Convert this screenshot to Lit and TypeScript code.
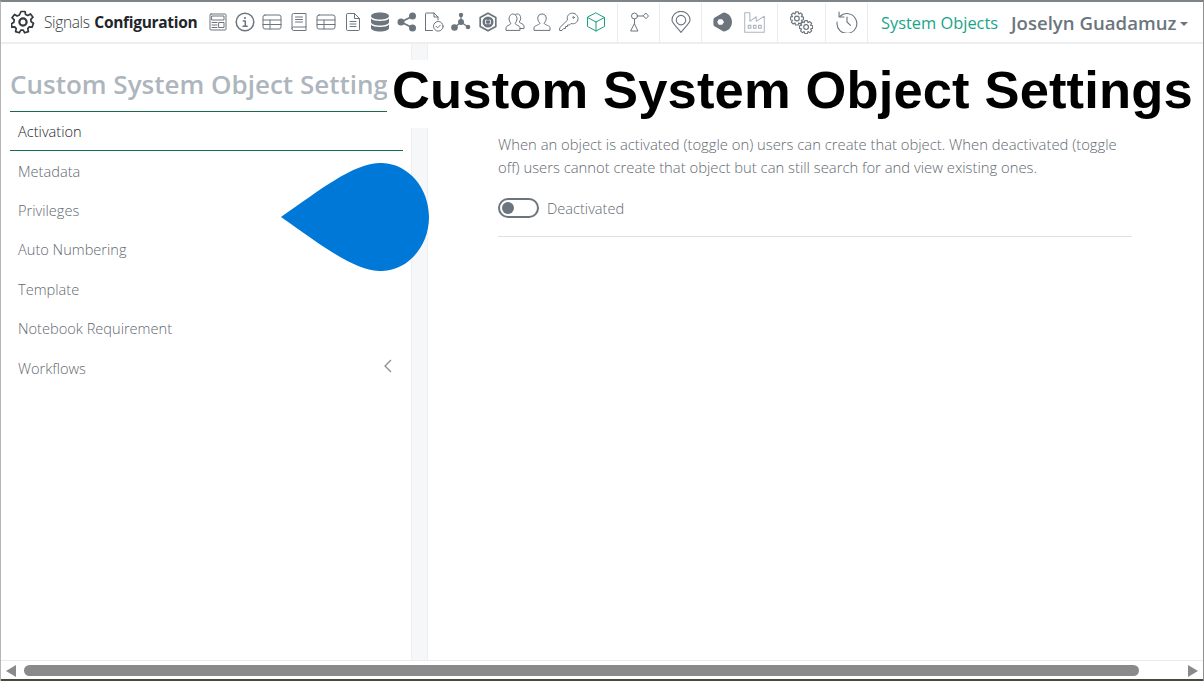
import { LitElement, html, css, svg } from "lit";
import { customElement } from "lit/decorators.js";

const s = (body: unknown, cls = "") =>
  html`<svg class="ic ${cls}" viewBox="0 0 20 20" fill="none" stroke="currentColor" stroke-width="1" stroke-linejoin="round" stroke-linecap="round">${body}</svg>`;

const grid = svg`<rect x="1" y="3" width="18" height="14" rx="2"/><path d="M1 8h18M1 12.500h18M8 8v9"/>`;
const icons = [
  s(svg`<rect x="2" y="2" width="16" height="16" rx="1"/><rect x="4" y="4" width="12" height="4"/><path d="M4 10.500h5M4 13h5M4 15.500h5"/><rect x="11" y="10.500" width="5" height="5"/>`),
  s(svg`<circle cx="10" cy="10" r="8.800" stroke-width="1.500"/><circle cx="10" cy="6" r="1.100" fill="currentColor" stroke="none"/><path d="M8.300 9h2v5M8 14.300h4.200" stroke-width="1.500"/>`),
  s(grid),
  s(svg`<path d="M3 16.500V3A1.500 1.500 0 0 1 4.500 1.500H17v13.500H4.500A1.500 1.500 0 0 0 3 16.500 1.800 1.800 0 0 0 4.800 18.500H17v-3.500"/><path d="M6.500 5h7M6.500 7.500h7M6.500 10h7"/>`),
  s(grid),
  s(svg`<path d="M3.500 2.500A1 1 0 0 1 4.500 1.500h7L16.500 6.500v11a1 1 0 0 1-1 1h-11a1 1 0 0 1-1-1z"/><path d="M11.500 1.500v5h5M7 9.500h6M7 12h6M7 14.500h6"/>`),
  s(svg`<g fill="currentColor" stroke="none"><path d="M1 4c0-2 4-3.500 9-3.500S19 2 19 4s-4 3.500-9 3.500S1 6 1 4z"/><path d="M1 6.500C2.500 8.300 6 9 10 9s7.500-.7 9-2.500V10c0 2-4 3.500-9 3.500S1 12 1 10z"/><path d="M1 12.500C2.500 14.300 6 15 10 15s7.500-.7 9-2.500V16c0 2-4 3.500-9 3.500S1 18 1 16z"/></g>`),
  s(svg`<g fill="currentColor" stroke="none"><circle cx="15.500" cy="4" r="3.500"/><circle cx="15.500" cy="16" r="3.500"/><circle cx="4" cy="10" r="3.500"/></g><path d="M15 4.500 4 10l11 5.500" stroke-width="1.800"/>`),
  s(svg`<path d="M1.500 18.500V2a1 1 0 0 1 1-1h7.500L14 5v3M10 1v4h4M1.500 18.500h7"/><circle cx="14.300" cy="14.300" r="4.800"/><path d="m12 14.300 1.600 1.600 2.800-2.800"/>`),
  s(svg`<g fill="currentColor" stroke="none"><circle cx="10" cy="3" r="2.200"/><circle cx="10" cy="10" r="3"/><circle cx="3.500" cy="15.500" r="3.300"/><circle cx="17" cy="15" r="2.300"/></g><path d="M10 3v7L3.500 15.500M10 10l7 5" stroke-width="1.300"/>`),
  s(svg`<path d="M10 1.200 17.800 5.600v8.800L10 18.800 2.200 14.400V5.600z" stroke-width="1.700"/><circle cx="10" cy="10" r="5.500" fill="currentColor" stroke="none"/><path d="M9 8.200H7.500v3.600H9M11 8.200h1.500v3.600H11" stroke="#fff" stroke-width=".8"/>`),
  s(svg`<path d="M1 18v-2.500c0-1.500 4-2.500 5-4-2-2-2.500-5-1.500-7C5.500 2.500 7 2 8 2s2.500.5 3.500 2.500c1 2 .5 5-1.500 7 1 1.500 5 2.500 5 4V18z"/><path d="M10.500 2.500c1-.7 3-.8 4 .3 1.800 2 1.500 5.200-.3 7.200.8 1.300 4.800 2.200 4.800 3.800V16.500h-4"/>`),
  s(svg`<path d="M2 18v-2.500c0-1.700 5-2.500 6-4.200-2.200-2-2.800-5-1.700-7.300C7 2.500 8.800 2 10 2s3 .5 3.700 2c1.100 2.300.5 5.300-1.700 7.300 1 1.700 6 2.500 6 4.200V18z"/>`),
  s(svg`<path d="M1 15.500 8.500 8c-1-3 .5-6.200 4-6.800 3.500-.5 6.500 2.200 6.500 5.500 0 3.800-3.800 5.800-7 4.800l-1.500 1.500H8.500V14.500H6.500V16.500H4.500L3 18.500H1z"/><circle cx="14.500" cy="5.500" r=".8"/>`),
  s(svg`<path d="M10 1 18.500 5.500v9L10 19l-8.500-4.500v-9z"/><path d="M1.500 5.500 10 10l8.500-4.500M10 10v9"/>`, "green"),
];
const flow = s(svg`<circle cx="5.500" cy="4" r="3"/><path d="M8.500 4h6"/><path d="m17 1.300 2.500 2.700-2.500 2.700L14.500 4z"/><path d="M5.500 7v5"/><path d="M5.500 12l3.500 7h-7z"/>`, "flow");
const pin = s(svg`<path d="M10 19.500C5.500 14 1.800 10.700 1.800 8.500a8.200 8.200 0 0 1 16.400 0c0 2.200-3.700 5.500-8.200 11z"/><circle cx="10" cy="8.300" r="4.300"/>`, "big");
const blob = s(svg`<path fill-rule="evenodd" fill="currentColor" stroke="none" d="M1 6 10.500 .5c5 .3 8.500 4.500 8.500 9.500s-3.500 9.200-8.500 9.500L1 14c-.8-.8-.8-7.200 0-8zM5.800 7.200 4.200 10l1.600 2.800h3.400L11 10 9.200 7.200z"/>`);
const factory = s(svg`<path d="M1.500 18.500V1.500h4.500V9l5.500-4v4l7-4.500v14z" stroke="#adb5bd" stroke-width=".9"/><rect x="4.500" y="12.500" width="2.400" height="2.400" stroke="#adb5bd" stroke-width=".9"/><rect x="9" y="12.500" width="2.400" height="2.400" stroke="#adb5bd" stroke-width=".9"/><rect x="13.500" y="12.500" width="2.400" height="2.400" stroke="#adb5bd" stroke-width=".9"/>`, "fact");
const cogPath = (cx: number, cy: number, r: number) => {
  const pts: string[] = [];
  const n = 8;
  for (let i = 0; i < n; i++) {
    const a = (i * Math.PI * 2) / n;
    const w = Math.PI / n;
    const spec: [number, number][] = [
      [r * 0.72, -w],
      [r, -w * 0.5],
      [r, w * 0.5],
      [r * 0.72, w],
    ];
    for (const [rad, off] of spec) {
      pts.push(`${(cx + rad * Math.sin(a + off)).toFixed(2)} ${(cy - rad * Math.cos(a + off)).toFixed(2)}`);
    }
  }
  return svg`<path d="M${pts.join("L")}z"/><circle cx=${cx} cy=${cy} r=${r * 0.36}/>`;
};
const cogs = s(svg`${cogPath(6, 6.500, 5.800)}${cogPath(14, 14, 5.800)}`, "cogs");
const history = s(svg`<path d="M3.500 5A9 9 0 1 1 1 10"/><path d="M2.800 1v4.500h4.500"/><path d="M10 5.500V10l3.200 3"/>`, "big");
const gear = html`<svg class="gear" viewBox="0 0 24 24" fill="none" stroke="currentColor" stroke-width="1.700" stroke-linejoin="round"><path d="M10 1.500h4l.6 3 2.200 1 2.700-1.600 2.500 3.300-2.200 2.100.3 2.400 2.400 1.500-1.300 3.900-2.900-.3-1.500 1.800.6 3-3.700 1.200-1.500-2.600h-2.400l-1.500 2.600-3.700-1.200.6-3-1.500-1.800-2.900.3L.5 13.700l2.400-1.500.3-2.400L1 7.700l2.500-3.300 2.700 1.600 2.200-1z" /><circle cx="12" cy="12" r="3.600" stroke-width="2.200"/></svg>`;

const items = ["Activation", "Metadata", "Privileges", "Auto Numbering", "Template", "Notebook Requirement", "Workflows"];

@customElement("app-root")
export class AppRoot extends LitElement {
  static styles = css`
    :host {
      display: block; position: relative; width: 1204px; height: 681px; overflow: hidden; box-sizing: border-box;
      background: #fff; border-top: 2px solid #7f8489; border-left: 1px solid #b5b5b5; border-right: 1px solid #8f8f8f;
      font-family: "Open Sans", "Noto Sans", sans-serif; color: #6c757d;
    }
    .shell { display: flex; flex-direction: column; height: 100%; }
    header { display: flex; align-items: center; height: 40px; border-bottom: 2px solid #eceef0; flex: none; color: #6c757d; }
    .gear { width: 24px; height: 24px; margin: 0 9px 0 10px; color: #33383d; flex: none; }
    .brand { font-size: 15.500px; font-weight: 300; color: #343a40; white-space: nowrap; width: 160px; letter-spacing: -0.35px; }
    .brand b { font-weight: 700; color: #212529; letter-spacing: -0.3px; margin-left: 1px; }
    .slots { display: flex; }
    .slot { width: 27px; display: flex; justify-content: center; align-items: center; height: 36px; }
    .seg { display: flex; align-items: center; justify-content: center; gap: 10px; height: 39px; border-left: 1px solid #e9ecef; flex: none; box-sizing: border-box; }
    .w42 { width: 42px; }
    .first { margin-left: 8px; }
    .w76 { width: 76px; }
    .w48 { width: 48px; }
    .ic { width: 20px; height: 20px; display: block; flex: none; }
    .ic.green { color: #17a27c; }
    .ic.big { width: 22px; height: 22px; }
    .ic.fact { width: 23px; height: 23px; }
    .ic.cogs { width: 23px; height: 23px; }
    .so { color: #17a589; font-size: 16.400px; font-weight: 400; margin-left: 13px; white-space: nowrap; width: 120px; }
    .user { font-size: 18.600px; font-weight: 600; white-space: nowrap; display: flex; align-items: center; }
    .caret { width: 0; height: 0; border: 4px solid transparent; border-top-color: #6c757d; border-bottom: 0; margin-left: 4px; margin-top: 3px; }
    .body { flex: 1; display: flex; min-height: 0; }
    aside { width: 411px; padding: 0 8px 0 9px; box-sizing: border-box; flex: none; border-right: 1px solid #eceef0; }
    h2 {
      margin: 20px 16px 0 0; font-size: 26px; font-weight: 600; line-height: 40px; height: 47px; box-sizing: content-box; color: #adb5bd; white-space: nowrap; overflow: hidden;
      border-bottom: 1px solid #1a6b4a;
    }
    ul { list-style: none; margin: 0; padding: 0; }
    li { height: 39.400px; line-height: 39px; padding-left: 8px; font-size: 14.600px; font-weight: 300; color: #5f6870; display: flex; justify-content: space-between; align-items: center; }
    li.active { color: #212529; height: 38.400px; border-bottom: 1px solid #1a6b4a; }
    .chev { width: 10px; height: 14px; margin-right: 10px; margin-top: -4px; color: #868e96; }
    .strip { width: 15px; background: #f6f7f9; border-right: 1px solid #eceef0; flex: none; }
    main { flex: 1; padding: 89px 70px 0; }
    main p { margin: 0; width: 634px; font-size: 14.800px; font-weight: 300; line-height: 23px; color: #5f6870; }
    .toggle-row { display: flex; align-items: center; gap: 8px; margin-top: 19px; padding-bottom: 18px; border-bottom: 1px solid #dee2e6; width: 634px; height: 20px; }
    .toggle { width: 41px; height: 20px; box-sizing: border-box; border: 2px solid #6c757d; border-radius: 10px; padding: 2px; }
    .knob { width: 12px; height: 12px; border-radius: 50%; background: #6c757d; }
    .toggle-label { font-size: 14.600px; font-weight: 300; color: #5f6870; }
    .scroll { flex: none; height: 15px; padding: 2px 6px 0 5px; border-top: 1px solid #e8eaef; background: #fff; display: flex; align-items: center; gap: 8px; margin-bottom: 1px; }
    .arrow { width: 0; height: 0; border-block: 6px solid transparent; flex: none; }
    .arrow.l { border-right: 10px solid #8a8a8a; }
    .arrow.r { border-left: 10px solid #8a8a8a; }
    .thumb { width: 1115px; height: 11px; border-radius: 6px; background: #8a8a8a; flex: none; margin-right: 41px; }
    .edge { flex: none; height: 2px; background: #4a4640; margin: 0 -1px; }
    .big-title {
      position: absolute; left: 388px; top: 58px; background: #fff; padding: 0 2px 0 3px; height: 68px; line-height: 60px;
      font-family: "Liberation Sans", Arial, sans-serif; font-weight: 700; font-size: 52.500px; letter-spacing: 0.15px; color: #000; white-space: nowrap;
    }
    .drop { position: absolute; left: 280px; top: 161px; width: 148px; height: 108px; }
  `;

  render() {
    return html`
      <div class="shell">
        <header>
          ${gear}
          <div class="brand">Signals <b>Configuration</b></div>
          <div class="slots">${icons.map((i) => html`<div class="slot">${i}</div>`)}</div>
          <div class="seg w42 first">${flow}</div>
          <div class="seg w42">${pin}</div>
          <div class="seg w76">${blob}${factory}</div>
          <div class="seg w48">${cogs}</div>
          <div class="seg w42">${history}</div>
          <div class="seg">
            <div class="so">System Objects</div>
            <div class="user">Joselyn Guadamuz<span class="caret"></span></div>
          </div>
        </header>
        <div class="body">
          <aside>
            <h2>Custom System Object Settings</h2>
            <ul>
              ${items.map(
                (t, i) => html`<li class=${i === 0 ? "active" : ""}>
                  <span>${t}</span>
                  ${t === "Workflows"
                    ? html`<svg class="chev" viewBox="0 0 10 14" fill="none" stroke="currentColor" stroke-width="1.300"><path d="M8 1 2 7l6 6"/></svg>`
                    : ""}
                </li>`
              )}
            </ul>
          </aside>
          <div class="strip"></div>
          <main>
            <p>When an object is activated (toggle on) users can create that object. When deactivated (toggle off) users cannot create that object but can still search for and view existing ones.</p>
            <div class="toggle-row">
              <div class="toggle"><div class="knob"></div></div>
              <span class="toggle-label">Deactivated</span>
            </div>
          </main>
        </div>
        <div class="scroll">
          <span class="arrow l"></span>
          <div class="thumb"></div>
          <span class="arrow r"></span>
        </div>
        <div class="edge"></div>
      </div>
      <div class="big-title">Custom System Object Settings</div>
      <svg class="drop" viewBox="0 0 148 108"><path fill="#0078d7" d="M0 54C40 26 72 1 98 0c28-1 50 24 50 54s-22 55-50 54C72 107 40 82 0 54z"/></svg>
    `;
  }
}
